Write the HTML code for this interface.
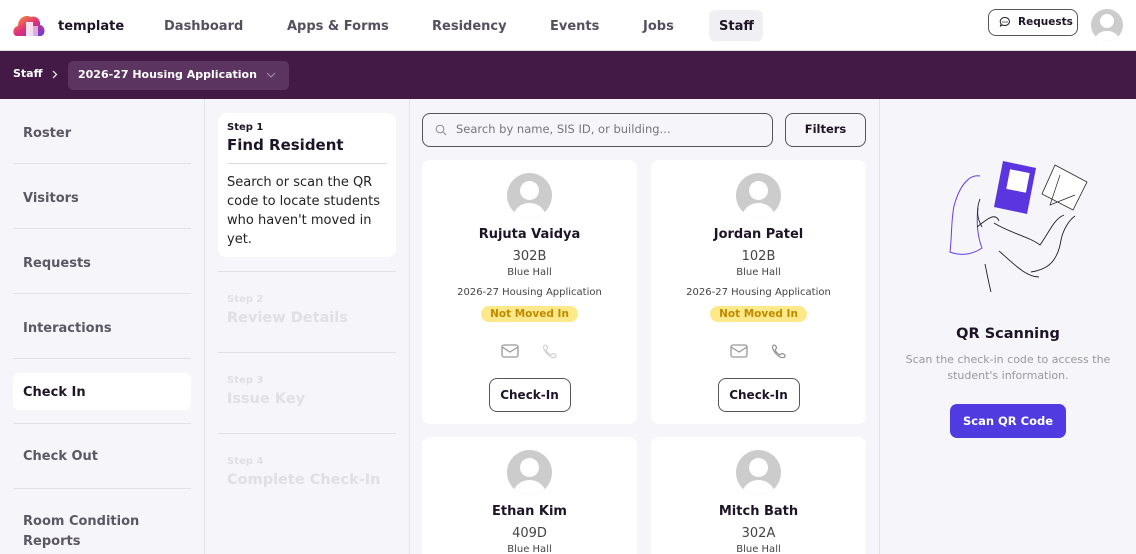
<!DOCTYPE html>
<html style="overflow:hidden"><head><meta charset="utf-8"><style>
*{box-sizing:border-box;margin:0;padding:0}
html,body{width:1136px;height:554px;overflow:hidden}
body{font-family:"DejaVu Sans","Liberation Sans",sans-serif;background:#f5f5fa;color:#1e1428;position:relative}
.nav{position:absolute;left:0;top:0;width:1136px;height:51px;background:#fff;border-bottom:1px solid #ddd}
.nav .t{position:absolute;font-weight:bold;font-size:13px;top:18.5px;color:#555060}
.bar{position:absolute;top:51px;left:0;width:1136px;height:48px;background:#421a45}
.side{position:absolute;left:0;top:99px;width:205px;height:455px;border-right:1px solid #e2e2ea}
.side .i{position:absolute;left:13px;width:178px;height:37px;font-weight:bold;font-size:13px;color:#5c5862;padding:12px 10px 0}
.side .l{position:absolute;left:13px;width:178px;height:1px;background:#e0e0e6}
.steps{position:absolute;left:205px;top:99px;width:205px;height:455px;border-right:1px solid #e2e2ea}
.st{position:absolute;left:13px;width:178px}
.st .s{font-size:10px;font-weight:bold;color:#e0e0e4;}
.st .h{font-size:14.5px;font-weight:bold;color:#e0e0e4;margin-top:5px}
.card{position:absolute;width:215px;background:#fff;border-radius:8px;text-align:center}
.av{width:45px;height:45px;border-radius:50%;background:#ccc;margin:13px auto 0;position:relative;overflow:hidden}
.av:before{content:"";position:absolute;left:13px;top:8px;width:19px;height:19px;border-radius:50%;background:#fff}
.av:after{content:"";position:absolute;left:6px;top:30px;width:33px;height:30px;border-radius:50%;background:#fff}
.nm{font-weight:bold;font-size:13px;margin-top:9px}
.rm{font-size:13px;color:#444;margin-top:7px}
.bl{font-size:10px;color:#444;margin-top:3px}
.ap{font-size:10px;color:#444;margin-top:9px}
.bd{display:inline-block;background:#fde98a;color:#c08a00;font-weight:bold;font-size:10.5px;border-radius:10px;padding:2px 9px;margin-top:8px}
.ic{margin-top:20px;height:20px}
.btn{display:inline-block;border:1px solid #555;border-radius:8px;width:82px;height:34px;line-height:32px;font-weight:bold;font-size:12px;margin-top:16px}
</style></head><body>
<div class="nav">
<svg style="position:absolute;left:12px;top:13px" width="34" height="24" viewBox="0 0 34 24"><defs><linearGradient id="g" x1="0" y1="0" x2="1" y2="1"><stop offset="0" stop-color="#f7a12c"/><stop offset=".5" stop-color="#e0307a"/><stop offset="1" stop-color="#5a3be8"/></linearGradient></defs><path d="M5 23 C0 23 0 14 6 13 C6 5 13 1 19 4 C24 2 29 7 28 12 C34 13 34 23 28 23Z" fill="url(#g)"/><rect x="14" y="9" width="7" height="14" fill="#fff" opacity=".85"/><rect x="21" y="13" width="5" height="10" fill="#fff" opacity=".6"/></svg>
<div class="t" style="left:58px;color:#1e1428">template</div>
<div class="t" style="left:164px">Dashboard</div>
<div class="t" style="left:287px">Apps &amp; Forms</div>
<div class="t" style="left:432px">Residency</div>
<div class="t" style="left:550px">Events</div>
<div class="t" style="left:643px">Jobs</div>
<div style="position:absolute;left:709px;top:10px;width:54px;height:31px;background:#f0f0f4;border-radius:6px"></div>
<div class="t" style="left:719px;color:#1e1428">Staff</div>
<div style="position:absolute;left:988px;top:9px;width:90px;height:27px;border:1px solid #555;border-radius:8px;font-size:10.5px;font-weight:bold;padding:6px 0 0 29px">Requests</div>
<svg style="position:absolute;left:999px;top:16px" width="12" height="12" viewBox="0 0 12 12"><path d="M6 1.5a4.5 4 0 1 1-2.6 7.3L1.5 10l.6-2.2A4.5 4 0 0 1 6 1.5z" fill="none" stroke="#222" stroke-width="1"/><circle cx="4" cy="6" r=".6"/><circle cx="6" cy="6" r=".6"/><circle cx="8" cy="6" r=".6"/></svg>
<svg style="position:absolute;left:1091px;top:9px" width="32" height="32" viewBox="0 0 32 32"><clipPath id="c"><circle cx="16" cy="16" r="16"/></clipPath><g clip-path="url(#c)"><rect width="32" height="32" fill="#ccc"/><circle cx="16" cy="12" r="7" fill="#fff"/><ellipse cx="16" cy="31" rx="12" ry="9" fill="#fff"/></g></svg>
</div>
<div class="bar">
<div style="position:absolute;left:13px;top:16px;color:#fff;font-weight:bold;font-size:11px">Staff</div>
<svg style="position:absolute;left:52px;top:19px" width="6" height="9" viewBox="0 0 6 9"><path d="M1 1l3.5 3.5L1 8" fill="none" stroke="#fff" stroke-width="1.2"/></svg>
<div style="position:absolute;left:68px;top:10px;width:221px;height:29px;background:#5b3560;border-radius:5px;color:#fff;font-weight:bold;font-size:11px;padding:7px 10px">2026-27 Housing Application</div>
<svg style="position:absolute;left:266px;top:21px" width="10" height="6" viewBox="0 0 10 6"><path d="M1 1l4 4 4-4" fill="none" stroke="#a58fa9" stroke-width="1"/></svg>
</div>
<div class="side">
<div class="i" style="top:15px">Roster</div><div class="l" style="top:64px"></div>
<div class="i" style="top:80px">Visitors</div><div class="l" style="top:129px"></div>
<div class="i" style="top:145px">Requests</div><div class="l" style="top:194px"></div>
<div class="i" style="top:210px">Interactions</div><div class="l" style="top:259px"></div>
<div class="i" style="top:274px;background:#fff;border-radius:6px;color:#1e1428">Check In</div><div class="l" style="top:324px"></div>
<div class="i" style="top:338px">Check Out</div><div class="l" style="top:389px"></div>
<div class="i" style="top:403px;line-height:20px;padding-top:10px">Room Condition Reports</div>
</div>
<div class="steps">
<div class="st" style="top:14px;background:#fff;border-radius:8px;height:144px;padding:9px 9px">
<div class="s" style="color:#1e1428">Step 1</div><div class="h" style="color:#1e1428;margin-top:3px;font-size:15px">Find Resident</div>
<div style="height:1px;background:#ddd;margin:9px 0 9px"></div>
<div style="font-size:13px;line-height:19px;color:#222">Search or scan the QR code to locate students who haven't moved in yet.</div></div>
<div style="position:absolute;left:13px;top:172px;width:178px;height:1px;background:#e0e0e6"></div>
<div class="st" style="top:195px;padding-left:9px"><div class="s">Step 2</div><div class="h">Review Details</div></div>
<div style="position:absolute;left:13px;top:253px;width:178px;height:1px;background:#e0e0e6"></div>
<div class="st" style="top:276px;padding-left:9px"><div class="s">Step 3</div><div class="h">Issue Key</div></div>
<div style="position:absolute;left:13px;top:334px;width:178px;height:1px;background:#e0e0e6"></div>
<div class="st" style="top:357px;padding-left:9px"><div class="s">Step 4</div><div class="h">Complete Check-In</div></div>
</div>
<div style="position:absolute;left:422px;top:113px;width:351px;height:34px;border:1px solid #555;border-radius:8px;font-size:11.5px;color:#777;padding:8px 0 0 33px">Search by name, SIS ID, or building...</div>
<svg style="position:absolute;left:435px;top:124px" width="12" height="12" viewBox="0 0 12 12"><circle cx="5" cy="5" r="3.8" fill="none" stroke="#888"/><path d="M8 8l3 3" stroke="#888"/></svg>
<div style="position:absolute;left:785px;top:113px;width:81px;height:34px;border:1px solid #555;border-radius:8px;font-size:11.5px;font-weight:bold;text-align:center;line-height:31px">Filters</div>

<div class="card" style="left:422px;top:160px;height:264px"><div class="av"></div><div class="nm">Rujuta Vaidya</div><div class="rm">302B</div><div class="bl">Blue Hall</div><div class="ap">2026-27 Housing Application</div><div class="bd">Not Moved In</div>
<div class="ic"><svg width="90" height="18" viewBox="0 0 90 18"><rect x="17" y="3" width="16" height="12" rx="2" fill="none" stroke="#999" stroke-width="1.3"/><path d="M17 5l8 5 8-5" fill="none" stroke="#999" stroke-width="1.3"/><path d="M60 3c2 0 3 3 2 4l-1 1c1 2 3 4 5 5l1-1c1-1 4 0 4 2s-3 2-5 1c-3-2-6-5-7-8-1-2 0-4 1-4z" fill="none" stroke="#ccc" stroke-width="1.1"/></svg></div>
<div class="btn">Check-In</div></div>
<div class="card" style="left:651px;top:160px;height:264px"><div class="av"></div><div class="nm">Jordan Patel</div><div class="rm">102B</div><div class="bl">Blue Hall</div><div class="ap">2026-27 Housing Application</div><div class="bd">Not Moved In</div>
<div class="ic"><svg width="90" height="18" viewBox="0 0 90 18"><rect x="17" y="3" width="16" height="12" rx="2" fill="none" stroke="#999" stroke-width="1.3"/><path d="M17 5l8 5 8-5" fill="none" stroke="#999" stroke-width="1.3"/><path d="M60 3c2 0 3 3 2 4l-1 1c1 2 3 4 5 5l1-1c1-1 4 0 4 2s-3 2-5 1c-3-2-6-5-7-8-1-2 0-4 1-4z" fill="none" stroke="#888" stroke-width="1.1"/></svg></div>
<div class="btn">Check-In</div></div>
<div class="card" style="left:422px;top:437px;height:130px"><div class="av"></div><div class="nm">Ethan Kim</div><div class="rm">409D</div><div class="bl">Blue Hall</div></div>
<div class="card" style="left:651px;top:437px;height:130px"><div class="av"></div><div class="nm">Mitch Bath</div><div class="rm">302A</div><div class="bl">Blue Hall</div></div>

<div style="position:absolute;left:879px;top:99px;width:257px;height:455px;border-left:1px solid #e2e2ea">
<svg style="position:absolute;left:0;top:0" width="256" height="220" viewBox="880 100 256 220">
<path d="M980 177c-10-2-20 8-26 30-3 15-2 30-4 46 10 4 22 3 32-4-4-10-6-25-4-40" fill="none" stroke="#6a3de8" stroke-width="1"/>
<path d="M1003 162l33 7-9 46-33-7z" fill="#5a35e0"/>
<rect x="1008" y="172" width="20" height="20" fill="#fff" transform="rotate(11 1018 182)"/>
<path d="M1055 166l32 17-14 28-31-16z" fill="#fff" stroke="#222" stroke-width=".8"/>
<path d="M1060 176l-10 30 25-10" fill="none" stroke="#222" stroke-width=".7"/>
<path d="M980 200c-3 8-4 18 2 28M977 228c8-6 18-16 22-6M994 224c16 10 36 14 46 22 10-14 14-26 24-30M999 252c12 10 26 26 40 26M985 265c2 10 4 20 6 28M1031 273c12-2 26-6 30-32 2-10 8-20 14-24" fill="none" stroke="#222" stroke-width=".9"/>
</svg>
<div style="position:absolute;left:0;width:256px;top:227px;text-align:center;font-weight:bold;font-size:14.5px">QR Scanning</div>
<div style="position:absolute;left:20px;width:216px;top:253px;text-align:center;font-size:11px;color:#999;line-height:16px">Scan the check-in code to access the student's information.</div>
<div style="position:absolute;left:70px;top:305px;width:116px;height:34px;background:#4f3be0;border-radius:7px;color:#fff;font-weight:bold;font-size:11.5px;text-align:center;line-height:34px">Scan QR Code</div>
</div>
</body></html>
